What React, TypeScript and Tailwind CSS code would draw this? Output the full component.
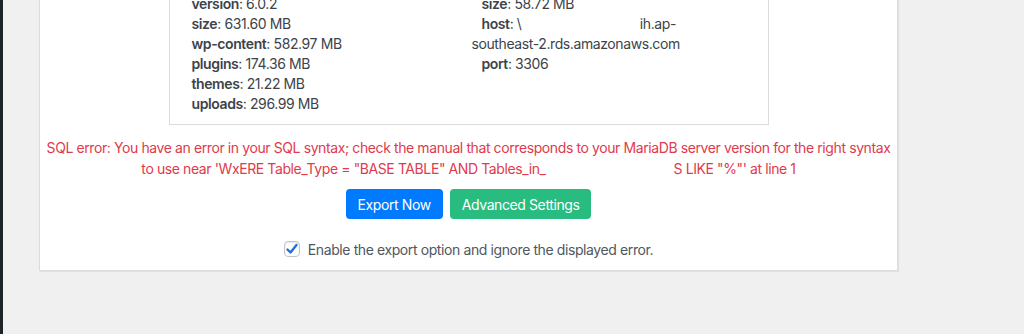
import React from "react";

const font = { fontFamily: '"Inter", "Noto Sans", sans-serif' };

function Row({ label, value }: { label: string; value: React.ReactNode }) {
  return (
    <div className="indent-[10px]">
      <span className="font-semibold text-[#3c434a]">{label}</span>
      <span>: {value}</span>
    </div>
  );
}

export default function App() {
  return (
    <div
      className="w-[1024px] h-[334px] overflow-hidden bg-[#f0f0f1] flex text-[14px] tracking-[-0.4px] text-[#3c434a]"
      style={font}
    >
      <div className="w-[3px] shrink-0 bg-[#1d2327]" />
      <div className="pl-[36px]">
        <div className="-mt-[31px] w-[859px] bg-white border border-[#dcdcde] shadow-[1px_1px_1px_rgba(0,0,0,0.06)] flex flex-col items-center pb-[11px]">
          <div className="mt-[13px] w-[600px] border border-[#dcdcde] pl-[12px] pt-[10px] pb-[10px] grid grid-cols-[290px_1fr] leading-[20px]">
            <div>
              <Row label="version" value="6.0.2" />
              <Row label="size" value="631.60 MB" />
              <Row label="wp-content" value="582.97 MB" />
              <Row label="plugins" value="174.36 MB" />
              <Row label="themes" value="21.22 MB" />
              <Row label="uploads" value="296.99 MB" />
            </div>
            <div className="w-[230px]">
              <Row label="size" value="58.72 MB" />
              <Row
                label="host"
                value={
                  <>
                    <span className="inline-block w-[123px] indent-0">\</span>ih.ap-southeast-2.rds.amazonaws.com
                  </>
                }
              />
              <Row label="port" value="3306" />
            </div>
          </div>
          <div className="mt-[12px] text-center text-[#e03a4c] leading-[21px]">
            <div className="whitespace-nowrap">
              SQL error: You have an error in your SQL syntax; check the manual that corresponds to your MariaDB server version for the right syntax
            </div>
            <div className="whitespace-nowrap">
              to use near 'WxERE Table_Type = "BASE TABLE" AND Tables_in_
              <span className="inline-block w-[128px]" />S LIKE "%"' at line 1
            </div>
          </div>
          <div className="mt-[10px] flex gap-[7px]">
            <button className="h-[30px] px-[12px] rounded-[4px] bg-[#007bff] text-white">
              Export Now
            </button>
            <button className="h-[30px] px-[12px] rounded-[4px] bg-[#28bc80] text-white">
              Advanced Settings
            </button>
          </div>
          <label className="mt-[20px] h-[20px] flex items-center gap-[8px] text-[#50575e]">
            <span className="w-[16px] h-[16px] rounded-[4px] border border-[#c3c4c7] bg-white flex items-center justify-center shadow-[inset_0_1px_2px_rgba(0,0,0,0.1)]">
              <svg width="14" height="14" viewBox="0 0 14 14">
                <path d="M2.5 7.5 L5.5 10.5 L11.5 3" fill="none" stroke="#2271d6" strokeWidth="2.4" strokeLinecap="round" strokeLinejoin="round" />
              </svg>
            </span>
            <span>Enable the export option and ignore the displayed error.</span>
          </label>
        </div>
      </div>
    </div>
  );
}
